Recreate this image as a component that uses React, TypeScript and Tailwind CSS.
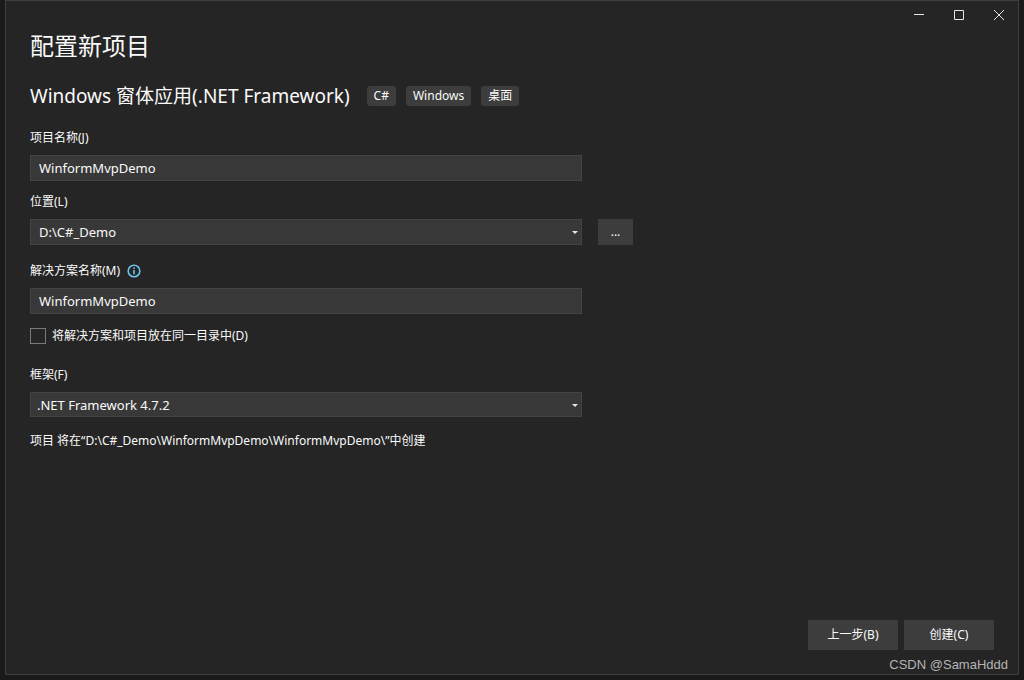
import { useState } from "react";
import type { ReactNode, SelectHTMLAttributes } from "react";

const tags = ["C#", "Windows", "桌面"];

const fieldClass =
  "block w-full rounded-none border border-[#434343] bg-[#383838] text-[13px] leading-4 text-[#fafafa] outline-none focus:border-[#6f6f6f]";

function Label({ htmlFor, children }: { htmlFor: string; children: ReactNode }) {
  return (
    <label htmlFor={htmlFor} className="block h-4 text-xs leading-4">
      {children}
    </label>
  );
}

function Select({ children, className, ...props }: SelectHTMLAttributes<HTMLSelectElement>) {
  return (
    <div className="relative">
      <select {...props} className={`${fieldClass} appearance-none pr-6 ${className ?? ""}`}>
        {children}
      </select>
      <svg className="pointer-events-none absolute top-3 right-1" width="6" height="3" viewBox="0 0 6 3" fill="#e6e6e6">
        <path d="M0 0h6L3 3z" />
      </svg>
    </div>
  );
}

function WindowControls() {
  return (
    <div className="-mr-px flex h-7 justify-end text-[#e6e6e6]">
      <button type="button" aria-label="最小化" className="flex w-10 items-center justify-center hover:bg-[#3d3d3d]">
        <svg width="10" height="10" viewBox="0 0 10 10" fill="none" stroke="currentColor"><path d="M0 4.5h10" /></svg>
      </button>
      <button type="button" aria-label="最大化" className="flex w-10 items-center justify-center hover:bg-[#3d3d3d]">
        <svg width="10" height="10" viewBox="0 0 10 10" fill="none" stroke="currentColor"><path d="M.5.5h9v9h-9z" /></svg>
      </button>
      <button type="button" aria-label="关闭" className="flex w-10 items-center justify-center hover:bg-[#c42b1c]">
        <svg width="10" height="10" viewBox="0 0 10 10" fill="none" stroke="currentColor"><path d="M0 0l10 10M10 0L0 10" /></svg>
      </button>
    </div>
  );
}

export default function App() {
  const [name, setName] = useState("WinformMvpDemo");
  const [solution, setSolution] = useState("WinformMvpDemo");
  const [location, setLocation] = useState("D:\\C#_Demo");
  const [sameDir, setSameDir] = useState(false);

  const target = sameDir ? `${location}\\${name}\\` : `${location}\\${solution}\\${name}\\`;

  return (
    <div className="flex min-h-screen bg-[#1b1a1a] px-[5px] pb-[5px] font-['Noto_Sans','Noto_Sans_CJK_SC',sans-serif] text-[#fafafa]">
      <div className="relative flex flex-1 flex-col border border-[#3f3f3f] bg-[#252525]">
        <WindowControls />

        <main className="flex-1 px-6 pt-px">
          <h1 className="text-2xl leading-8">配置新项目</h1>

          <div className="mt-5 flex items-center">
            <h2 className="text-[19px] leading-7">Windows 窗体应用(.NET Framework)</h2>
            <ul className="ml-[17px] flex gap-[10px]">
              {tags.map((t) => (
                <li key={t} className="h-5 rounded-[3px] bg-[#3d3d3d] px-[7px] text-xs leading-5">{t}</li>
              ))}
            </ul>
          </div>

          <div className="mt-5 max-w-[552px] space-y-[9px]">
            <Label htmlFor="name">项目名称(J)</Label>
            <input id="name" value={name} onChange={(e) => setName(e.target.value)} className={`${fieldClass} h-[26px] px-2`} />
          </div>

          <div className="mt-[13px] space-y-[9px]">
            <Label htmlFor="location">位置(L)</Label>
            <div className="flex gap-4">
              <div className="max-w-[552px] flex-1">
                <Select id="location" value={location} onChange={(e) => setLocation(e.target.value)} className="h-[26px] pl-2">
                  <option>{"D:\\C#_Demo"}</option>
                </Select>
              </div>
              <button type="button" aria-label="浏览" className="w-[35px] bg-[#3d3d3d] text-xs hover:bg-[#4a4a4a]">...</button>
            </div>
          </div>

          <div className="mt-[18px] max-w-[552px] space-y-[9px]">
            <div className="flex items-center gap-[7px]">
              <Label htmlFor="solution">解决方案名称(M)</Label>
              <svg width="14" height="14" viewBox="0 0 14 14" fill="none" stroke="#6cc4e8" strokeWidth="1.6">
                <circle cx="7" cy="7" r="5.8" />
                <path d="M7 6v4.2M7 3.6v1.5" />
              </svg>
            </div>
            <input id="solution" value={solution} onChange={(e) => setSolution(e.target.value)} className={`${fieldClass} h-[26px] px-2`} />
          </div>

          <label className="mt-[14px] flex items-center gap-1.5 text-xs leading-4">
            <input
              type="checkbox"
              checked={sameDir}
              onChange={(e) => setSameDir(e.target.checked)}
              className="size-4 appearance-none border border-[#7a7a7a] bg-[#252525] checked:bg-[#6cc4e8]"
            />
            将解决方案和项目放在同一目录中(D)
          </label>

          <div className="mt-[23px] max-w-[552px] space-y-[9px]">
            <Label htmlFor="framework">框架(F)</Label>
            <Select id="framework" defaultValue="4.7.2" className="h-[25px] pl-1.5">
              <option value="4.7.2">.NET Framework 4.7.2</option>
            </Select>
          </div>

          <p className="mt-4 text-xs leading-4">项目 将在“{target}”中创建</p>
        </main>

        <footer className="flex justify-end gap-1.5 px-6 pb-6 text-xs">
          <button type="button" className="h-[30px] w-[90px] bg-[#3d3d3d] hover:bg-[#4a4a4a]">上一步(B)</button>
          <button type="button" className="h-[30px] w-[90px] bg-[#3d3d3d] hover:bg-[#4a4a4a]">创建(C)</button>
        </footer>

        <span className="absolute right-[10px] bottom-px font-['Liberation_Sans',sans-serif] text-[13px] leading-4 text-[#b4b4b4]">CSDN @SamaHddd</span>
      </div>
    </div>
  );
}
